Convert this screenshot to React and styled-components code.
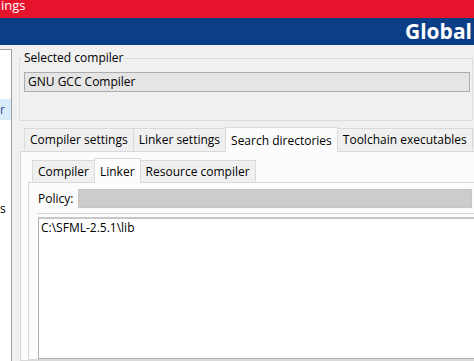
import React from "react";
import styled, { createGlobalStyle } from "styled-components";

const GlobalStyle = createGlobalStyle`
  html, body { margin: 0; padding: 0; background: #f0f0f0; overflow: hidden; }
  body { font-family: "Open Sans", "Noto Sans", sans-serif; font-size: 12px; color: #000; }
`;

const Window = styled.div`
  width: 474px;
  height: 361px;
  overflow: hidden;
  display: flex;
  flex-direction: column;
  background: #f0f0f0;
`;

const TitleBar = styled.div`
  flex: none;
  height: 18px;
  background: #e5132b;
  color: #fff;
  font-size: 13px;
  line-height: 8px;
  padding: 1px 0 0 1px;
  box-sizing: border-box;
  white-space: nowrap;
`;

const Banner = styled.div`
  flex: none;
  height: 27px;
  background: #0a3e86;
  color: #fff;
  display: flex;
  justify-content: flex-end;
  align-items: center;
  padding-right: 2px;
  font-weight: 700;
  font-size: 21px;
  line-height: 27px;
  white-space: nowrap;
`;

const Body = styled.div`
  flex: 1;
  min-height: 0;
  display: flex;
`;

const SideList = styled.div`
  flex: none;
  width: 11px;
  margin-top: 4px;
  background: #fff;
  border-top: 1px solid #a0a0a0;
  border-right: 1px solid #a0a0a0;
  display: flex;
  flex-direction: column;
  gap: 78px;
  padding-top: 49px;
  overflow: hidden;
`;

const ListItem = styled.div`
  height: 21px;
  line-height: 21px;
  white-space: nowrap;
  background: ${(p) => (p.$selected ? "#d9ebf9" : "transparent")};
  color: ${(p) => (p.$selected ? "#1c4f8f" : "#000")};
`;

const Main = styled.div`
  flex: 1;
  min-width: 0;
  display: flex;
  flex-direction: column;
  padding-top: 5px;
`;

const GroupBox = styled.fieldset`
  margin: 0 1px 0 7px;
  padding: 6px 2px 28px 4px;
  border: 1px solid #dcdcdc;
  min-width: 0;
`;

const GroupLabel = styled.legend`
  margin-left: -2px;
  padding: 0 2px;
  line-height: 16px;
`;

const ComboBox = styled.div`
  height: 18px;
  line-height: 18px;
  background: #e5e5e5;
  border: 1px solid #adadad;
  padding-left: 3px;
  white-space: nowrap;
`;

const Notebook = styled.div`
  flex: 1;
  min-height: 0;
  display: flex;
  flex-direction: column;
  margin: ${(p) => p.$margin};
`;

const TabStrip = styled.div`
  flex: none;
  display: flex;
  align-items: flex-end;
  padding-left: 4px;
  position: relative;
  z-index: 1;
`;

const Tab = styled.div`
  height: ${(p) => (p.$selected ? p.$tall : p.$short)}px;
  margin-bottom: ${(p) => (p.$selected ? -1 : 0)}px;
  padding: 0 ${(p) => p.$pad}px;
  background: ${(p) => (p.$selected ? "#fcfcfc" : "#f0f0f0")};
  border: 1px solid #d9d9d9;
  border-bottom: ${(p) => (p.$selected ? "none" : "1px solid transparent")};
  display: flex;
  align-items: center;
  white-space: nowrap;
  & + & { margin-left: -1px; }
`;

const Panel = styled.div`
  flex: 1;
  min-height: 0;
  background: #fcfcfc;
  border: 1px solid #d9d9d9;
  display: flex;
  flex-direction: column;
  padding: ${(p) => p.$pad};
`;

const PolicyRow = styled.div`
  flex: none;
  display: flex;
  align-items: center;
  gap: 5px;
  padding-right: 8px;
`;

const PolicyBar = styled.div`
  flex: 1;
  height: 17px;
  background: #cccccc;
  border: 1px solid #c6c6c6;
`;

const Separator = styled.div`
  flex: none;
  height: 1px;
  margin: 5px 0 0 -1px;
  background: #d4d4d4;
`;

const ListBox = styled.div`
  flex: 1;
  margin-top: 3px;
  background: #fff;
  border: 1px solid #abadb3;
  border-top: 2px solid #c8c8c8;
  padding: 1px 2px;
  line-height: 16px;
  white-space: nowrap;
`;

const mainTabs = ["Compiler settings", "Linker settings", "Search directories", "Toolchain executables"];
const subTabs = ["Compiler", "Linker", "Resource compiler"];

export default function App() {
  return (
    <>
      <GlobalStyle />
      <Window>
        <TitleBar>ings</TitleBar>
        <Banner>Global</Banner>
        <Body>
          <SideList>
            <ListItem $selected>r</ListItem>
            <ListItem>s</ListItem>
          </SideList>
          <Main>
            <GroupBox>
              <GroupLabel>Selected compiler</GroupLabel>
              <ComboBox>GNU GCC Compiler</ComboBox>
            </GroupBox>
            <Notebook $margin="6px -8px 0 8px">
              <TabStrip>
                {mainTabs.map((t, i) => (
                  <Tab key={t} $selected={i === 2} $tall={24} $short={21} $pad={5}>
                    {t}
                  </Tab>
                ))}
              </TabStrip>
              <Panel $pad="6px 0 0 7px">
                <Notebook $margin="0">
                  <TabStrip>
                    {subTabs.map((t, i) => (
                      <Tab key={t} $selected={i === 1} $tall={24} $short={20} $pad={5}>
                        {t}
                      </Tab>
                    ))}
                  </TabStrip>
                  <Panel $pad="6px 0 0 9px">
                    <PolicyRow>
                      <span>Policy:</span>
                      <PolicyBar />
                    </PolicyRow>
                    <Separator />
                    <ListBox>C:\SFML-2.5.1\lib</ListBox>
                  </Panel>
                </Notebook>
              </Panel>
            </Notebook>
          </Main>
        </Body>
      </Window>
    </>
  );
}
